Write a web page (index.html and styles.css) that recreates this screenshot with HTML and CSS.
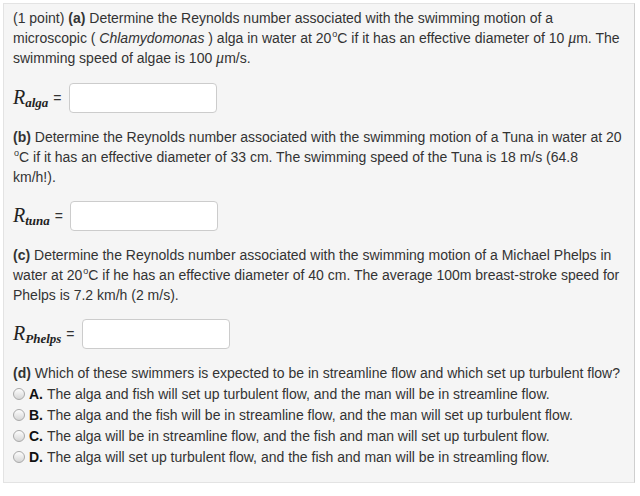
FILE: index.html
```html
<!DOCTYPE html>
<html>
<head>
<meta charset="utf-8">
<link rel="stylesheet" href="styles.css">
</head>
<body>
<div class="panel">
  <p class="q">(1 point) <b>(a)</b> Determine the Reynolds number associated with the swimming motion of a microscopic ( <i>Chlamydomonas</i> ) alga in water at 20<sup class="deg">o</sup>C if it has an effective diameter of 10 <span class="mu">μ</span>m. The swimming speed of algae is 100 <span class="mu">μ</span>m/s.</p>
  <div class="ans">
    <span class="var"><span class="r">R</span><sub>alga</sub></span>
    <span class="eq">=</span>
    <input class="box" type="text">
  </div>

  <p class="q"><b>(b)</b> Determine the Reynolds number associated with the swimming motion of a Tuna in water at 20 <sup class="deg">o</sup>C if it has an effective diameter of 33 cm. The swimming speed of the Tuna is 18 m/s (64.8 km/h!).</p>
  <div class="ans">
    <span class="var"><span class="r">R</span><sub>tuna</sub></span>
    <span class="eq">=</span>
    <input class="box" type="text">
  </div>

  <p class="q"><b>(c)</b> Determine the Reynolds number associated with the swimming motion of a Michael Phelps in water at 20<sup class="deg">o</sup>C if he has an effective diameter of 40 cm. The average 100m breast-stroke speed for Phelps is 7.2 km/h (2 m/s).</p>
  <div class="ans">
    <span class="var"><span class="r">R</span><sub>Phelps</sub></span>
    <span class="eq">=</span>
    <input class="box" type="text">
  </div>

  <p class="q"><b>(d)</b> Which of these swimmers is expected to be in streamline flow and which set up turbulent flow?</p>
  <ul class="opts">
    <li><span class="radio"></span><b>A.</b>&nbsp;The alga and fish will set up turbulent flow, and the man will be in streamline flow.</li>
    <li><span class="radio"></span><b>B.</b>&nbsp;The alga and the fish will be in streamline flow, and the man will set up turbulent flow.</li>
    <li><span class="radio"></span><b>C.</b>&nbsp;The alga will be in streamline flow, and the fish and man will set up turbulent flow.</li>
    <li><span class="radio"></span><b>D.</b>&nbsp;The alga will set up turbulent flow, and the fish and man will be in streamling flow.</li>
  </ul>
</div>
</body>
</html>
```

FILE: styles.css
```css
html, body {
  margin: 0;
  padding: 0;
  background: #fff;
}
body {
  padding: 3px;
  font-family: "Liberation Sans", Arial, sans-serif;
  font-size: 14px;
  line-height: 20px;
  color: #333;
}
.panel {
  width: 610px;
  background: #f5f5f5;
  border: 1px solid #e3e3e3;
  border-right-color: #cfcfcf;
  padding: 4px 11px 15px 9px;
}
.q {
  margin: 0;
}
.deg {
  font-size: 9px;
  line-height: 0;
  vertical-align: 6px;
  margin-left: 1px;
}
.mu {
  font-family: "Liberation Serif", "Times New Roman", serif;
  font-style: italic;
  font-size: 16px;
}
.ans {
  display: flex;
  align-items: center;
  height: 30px;
  margin: 15px 0 14px;
}
.ans + .q + .ans {
  margin-top: 14px;
}
.var {
  font-family: "Liberation Serif", "Times New Roman", serif;
  font-style: italic;
  color: #222;
  white-space: nowrap;
}
.r {
  font-size: 20px;
}
.var sub {
  font-size: 13px;
  font-weight: bold;
  vertical-align: -3px;
  line-height: 0;
}
.eq {
  margin-left: 5px;
  margin-right: 7px;
  color: #333;
}
.box {
  width: 148px;
  height: 30px;
  box-sizing: border-box;
  border: 1px solid #ccc;
  border-radius: 4px;
  background: #fff;
  margin: 0;
  padding: 0 6px;
}
.opts {
  list-style: none;
  margin: 0;
  padding: 0;
}
.opts li {
  display: flex;
  align-items: center;
  height: 21px;
}
.radio {
  box-sizing: border-box;
  width: 12px;
  height: 12px;
  border: 1px solid #a9a9a9;
  border-radius: 50%;
  background: linear-gradient(#fdfdfd, #d6d6d6);
  margin-right: 4px;
  flex: none;
}
.opts b {
  color: #111;
}
```
